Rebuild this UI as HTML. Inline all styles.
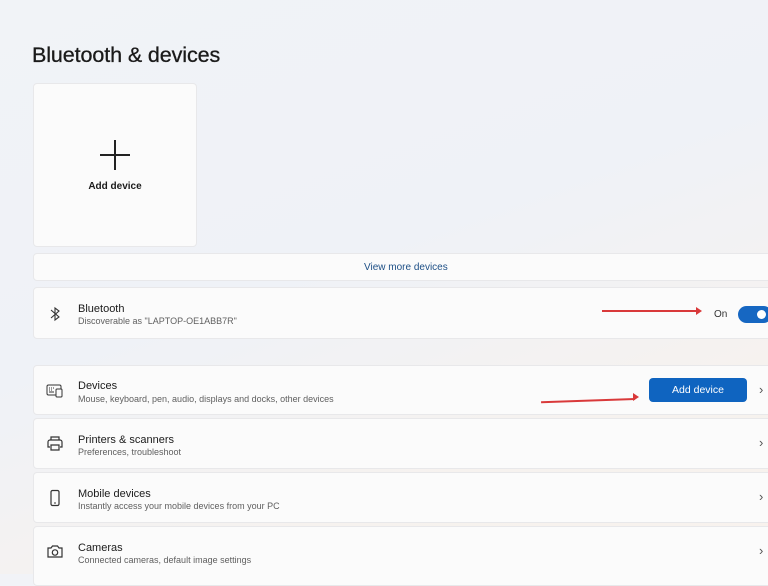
<!DOCTYPE html>
<html><head><style>
body{margin:0;width:768px;height:574px;overflow:hidden;font-family:"Liberation Sans",sans-serif;background:linear-gradient(160deg,#f1f3f7 0%,#eff2f7 45%,#f6f2ef 75%,#f8f2ed 100%);position:relative}
h1{position:absolute;left:32px;top:43px;margin:0;font-size:21.5px;font-weight:normal;color:#1a1a1a;letter-spacing:-.1px;-webkit-text-stroke:.3px #1a1a1a}
.c{position:absolute;left:33px;right:-10px;background:#fbfbfb;border:1px solid #e8e8ea;border-radius:4px;box-sizing:border-box}
.t{position:absolute;left:44px;font-size:11px;color:#1b1b1b}
.s{position:absolute;left:44px;font-size:9px;color:#5f5f5f}
.ic{position:absolute;left:12px;width:18px;height:18px}
.ch{position:absolute;left:725px;font-size:13px;color:#555}
</style></head><body>
<h1>Bluetooth &amp; devices</h1>
<div class="c" style="right:auto;top:83px;width:164px;height:164px">
<div style="position:absolute;left:66px;top:70px;width:30px;height:2px;background:#222"></div>
<div style="position:absolute;left:80px;top:56px;width:2px;height:30px;background:#222"></div>
<div style="position:absolute;left:0;right:0;top:97px;text-align:center;font-size:10px;font-weight:bold;color:#1b1b1b">Add device</div>
</div>
<div class="c" style="top:253px;height:28px"><div style="position:absolute;left:330px;top:8px;font-size:10px;color:#1d4f86">View more devices</div></div>
<div class="c" style="top:287px;height:52px">
<svg class="ic" style="top:17px" viewBox="0 0 18 18"><path d="M5 5l8 7-4 3V3l4 3-8 7" fill="none" stroke="#333" stroke-width="1.1"/></svg>
<div class="t" style="top:15px">Bluetooth</div><div class="s" style="top:28px">Discoverable as "LAPTOP-OE1ABB7R"</div>
<div style="position:absolute;left:680px;top:21px;font-size:10px;color:#333">On</div>
<div style="position:absolute;left:704px;top:18px;width:34px;height:17px;border-radius:9px;background:#1667c2"><div style="position:absolute;left:19px;top:4px;width:9px;height:9px;border-radius:50%;background:#fff"></div></div>
</div>
<div style="position:absolute;left:602px;top:310px;width:98px;height:2px;background:#d9393a"></div>
<div style="position:absolute;left:696px;top:307px;border-left:6px solid #d9393a;border-top:4px solid transparent;border-bottom:4px solid transparent"></div>
<div class="c" style="top:365px;height:50px">
<svg class="ic" style="top:15px" viewBox="0 0 18 18"><rect x="1" y="4" width="14" height="10" rx="1.5" fill="none" stroke="#333"/><rect x="10" y="8" width="6" height="8" rx="1" fill="#fbfbfb" stroke="#333"/><path d="M3 7h1M5 7h1M7 7h1M3 9h1M5 9h1M3 11h5" stroke="#333"/></svg>
<div class="t" style="top:14px">Devices</div><div class="s" style="top:28px">Mouse, keyboard, pen, audio, displays and docks, other devices</div>
<div style="position:absolute;left:615px;top:12px;width:98px;height:24px;border-radius:4px;background:#0f64c0;color:#fff;font-size:10.5px;text-align:center;line-height:24px">Add device</div>
<div class="ch" style="top:16px">›</div>
</div>
<div style="position:absolute;left:541px;top:398px;width:94px;height:2px;background:#d9393a;transform:rotate(-2deg);transform-origin:right"></div>
<div style="position:absolute;left:633px;top:393px;border-left:6px solid #d9393a;border-top:4px solid transparent;border-bottom:4px solid transparent"></div>
<div class="c" style="top:418px;height:51px">
<svg class="ic" style="top:15px" viewBox="0 0 18 18"><path d="M5 6V3h8v3M4 13H2V8a2 2 0 012-2h10a2 2 0 012 2v5h-2M5 11h8v5H5z" fill="none" stroke="#333" stroke-width="1.2"/></svg>
<div class="t" style="top:15px">Printers &amp; scanners</div><div class="s" style="top:28px">Preferences, troubleshoot</div><div class="ch" style="top:16px">›</div>
</div>
<div class="c" style="top:472px;height:51px">
<svg class="ic" style="top:16px" viewBox="0 0 18 18"><rect x="5" y="1.5" width="8" height="15" rx="1.5" fill="none" stroke="#333" stroke-width="1.2"/><path d="M8 14h2" stroke="#333"/></svg>
<div class="t" style="top:15px">Mobile devices</div><div class="s" style="top:28px">Instantly access your mobile devices from your PC</div><div class="ch" style="top:16px">›</div>
</div>
<div class="c" style="top:526px;height:60px">
<svg class="ic" style="top:15px" viewBox="0 0 18 18"><path d="M2 6h3l1.5-2h5L13 6h3v9H2z" fill="none" stroke="#333" stroke-width="1.2"/><circle cx="9" cy="10.5" r="2.7" fill="none" stroke="#333" stroke-width="1.2"/></svg>
<div class="t" style="top:15px">Cameras</div><div class="s" style="top:28px">Connected cameras, default image settings</div><div class="ch" style="top:16px">›</div>
</div>
</body></html>
